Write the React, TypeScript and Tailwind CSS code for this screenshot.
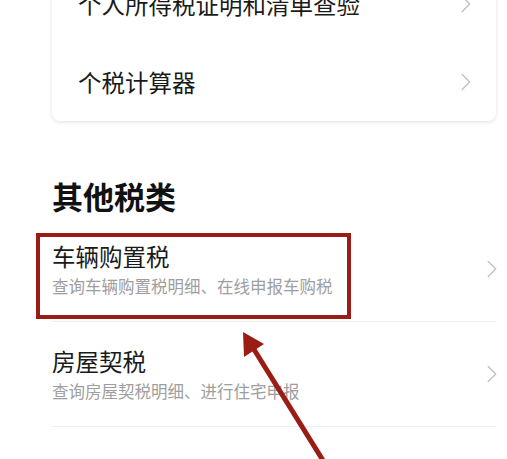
import { ChevronRight } from "lucide-react";

const cjk = { fontFamily: '"Noto Sans CJK SC", "Noto Sans", sans-serif' };

function CardRow({ label }: { label: string }) {
  return (
    <div className="flex h-[78px] items-center justify-between pl-[26px] pr-[15px]">
      <span className="text-[23.5px] leading-[28px] text-[#1a1a1a]">{label}</span>
      <ChevronRight className="h-[30px] w-[30px] text-[#c2c2c2]" strokeWidth={1.1} />
    </div>
  );
}

function TaxItem({ title, desc }: { title: string; desc: string }) {
  return (
    <div className="flex h-[105px] items-center justify-between border-b border-[#efefef]">
      <div className="flex flex-col gap-[6px]">
        <span className="text-[23.5px] leading-[28px] text-[#1a1a1a]">{title}</span>
        <span className="text-[16.5px] leading-[20px] text-[#9e9e9e]">{desc}</span>
      </div>
      <ChevronRight className="-mr-[11px] h-[30px] w-[30px] text-[#c2c2c2]" strokeWidth={1.1} />
    </div>
  );
}

export default function App() {
  return (
    <div className="relative h-[459px] w-[507px] overflow-hidden bg-white" style={cjk}>
      {/* 上方卡片（顶部被裁掉） */}
      <div className="ml-[52px] mr-[11px] -mt-[35px] rounded-lg bg-white shadow-[0_1px_4px_rgba(0,0,0,0.12)]">
        <CardRow label="个人所得税证明和清单查验" />
        <CardRow label="个税计算器" />
      </div>

      {/* 其他税类 */}
      <div className="pl-[52px] pr-[11px] pt-[57px]">
        <h2 className="text-[31px] font-bold leading-[36px] text-[#111]">其他税类</h2>
        <div className="mt-[3px]">
          <TaxItem title="车辆购置税" desc="查询车辆购置税明细、在线申报车购税" />
          <TaxItem title="房屋契税" desc="查询房屋契税明细、进行住宅申报" />
        </div>
      </div>

      {/* 标注：红框 + 箭头 */}
      <div className="absolute left-[36px] top-[233px] h-[86px] w-[315px] border-[4px] border-[#9a1d15]" />
      <svg className="pointer-events-none absolute left-0 top-0" width="507" height="459">
        <line x1="324" y1="462" x2="250" y2="343" stroke="#9a1d15" strokeWidth="5" />
        <polygon points="243,332 264,344 244,357" fill="#9a1d15" />
      </svg>
    </div>
  );
}
